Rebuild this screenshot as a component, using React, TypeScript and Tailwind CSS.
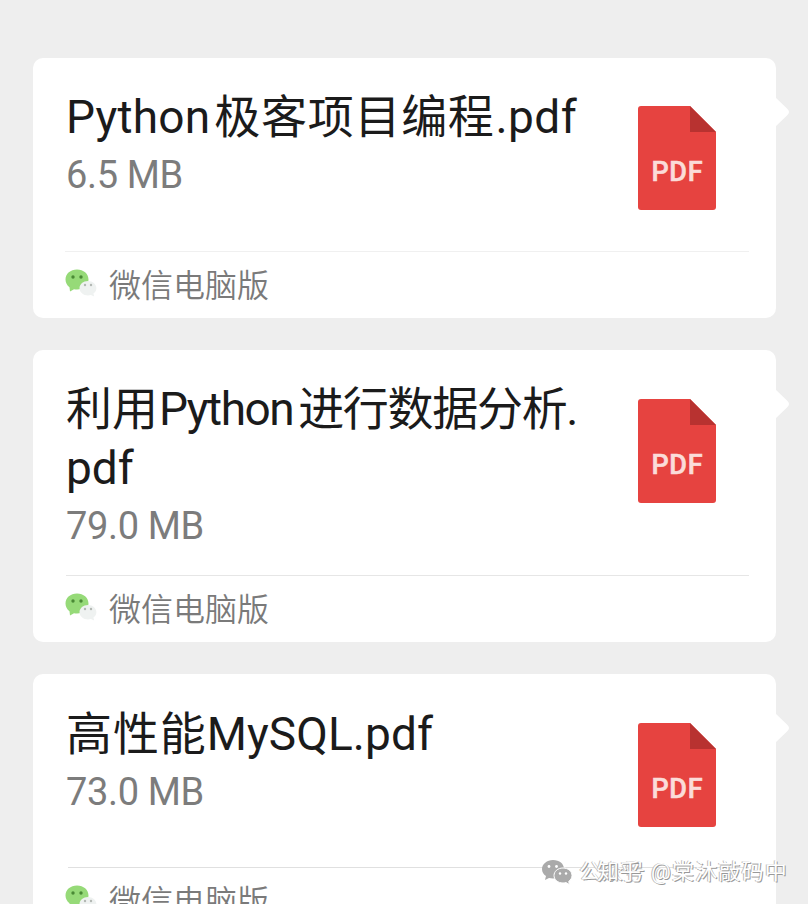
type TextRun = {
    text: string;
    className: string;
};

type FileMessage = {
    // every title line is split into latin and chinese runs
    title: TextRun[][];
    size: string;
    bodyClass: string;
    cardClass: string;
    iconClass: string;
    lineClass: string;
};

const files: FileMessage[] = [
    {
        title: [
            [
                {text: "Python", className: "mr-[4px] tracking-[0.2px]"},
                {text: "极客项目编程", className: "mr-[1px] tracking-[0.7px]"},
                {text: ".pdf", className: "tracking-[0.4px]"},
            ],
        ],
        size: "6.5 MB",
        bodyClass: "h-[193px] pt-[30px]",
        cardClass: "h-[260px]",
        iconClass: "mt-[17px]",
        lineClass: "ml-8 bg-[#f0f0f0]",
    },
    {
        title: [
            [
                {text: "利用", className: "mr-px"},
                {text: "Python", className: "mr-[5px] tracking-[-1.5px]"},
                {text: "进行数据分析", className: "tracking-[-1.3px]"},
                {text: ".", className: ""},
            ],
            [{text: "pdf", className: ""}],
        ],
        size: "79.0 MB",
        bodyClass: "h-[225px] pt-[30px]",
        cardClass: "h-[292px]",
        iconClass: "mt-[18px]",
        lineClass: "ml-[33px] bg-[#e6e6e6]",
    },
    {
        title: [
            [
                {text: "高性能", className: "tracking-[0.9px]"},
                {text: "MySQL.pdf", className: "tracking-[0.1px]"},
            ],
        ],
        size: "73.0 MB",
        bodyClass: "h-[193px] pt-[31px]",
        cardClass: "h-[260px]",
        iconClass: "mt-[17px]",
        lineClass: "ml-[35px] bg-[#e0e0e0]",
    },
];

const PdfIcon = () => (
    <svg width="80" height="106" viewBox="0 0 80 106" className="block shrink-0">
        <path d="M4 1H53L79 27V102Q79 105 76 105H4Q1 105 1 102V4Q1 1 4 1Z" fill="#e64340" />
        <path d="M53 1L79 27H53Z" fill="#b83230" />
        <text x="14.5" y="75.500" fontSize="27" fontWeight="500" textLength="51" fill="#fbdcd9" stroke="#fbdcd9" strokeWidth="0.6" fontFamily="Roboto, sans-serif">
            PDF
        </text>
    </svg>
);

const WechatIcon = () => (
    <svg width="32" height="30" viewBox="0 0 32 30" className="block shrink-0">
        <path d="M12 .5C5.500 .5 .5 4.800 .5 10.500c0 3.200 1.500 5.900 4 7.700L5 22.500l4-2.300c1 .2 2 .3 3 .3 6.500 0 11.500-4.300 11.500-10S18.500 .5 12 .5Z" fill="#96da78" />
        <circle cx="8" cy="8" r="1.700" fill="#4a8a35" />
        <circle cx="16" cy="8" r="1.700" fill="#4a8a35" />
        <path d="M23 12c-4.700 0-8.500 3.200-8.500 7.200s3.800 7.200 8.500 7.200c1 0 2-.1 2.900-.4l3.300 1.600-.8-3c1.800-1.300 3-3.200 3-5.400 0-4-3.700-7.200-8.400-7.200Z" fill="#eff2f1" />
        <circle cx="20" cy="16" r="1.200" fill="#b3b8b4" />
        <circle cx="26" cy="16" r="1.200" fill="#b3b8b4" />
    </svg>
);

const FileCard = ({file}: {file: FileMessage}) => (
    <div className={`relative w-[743px] shrink-0 rounded-[10px] bg-white ${file.cardClass}`}>
        {/* bubble tail */}
        <svg width="15" height="32" viewBox="0 0 15 32" className="absolute top-[38px] left-[742px]">
            <path d="M0 1L12 12.500Q16 16 12 19.500L0 31Z" fill="#fff" />
        </svg>
        <div className={`flex pl-[33px] ${file.bodyClass}`}>
            <div className="w-[571px] shrink-0">
                <h2 className="text-[46px] leading-[59px] whitespace-nowrap text-[#1b1b1b]">
                    {file.title.map((line, i) => (
                        <span key={i} className="block">
                            {line.map(run => (
                                <span key={run.text} className={run.className}>{run.text}</span>
                            ))}
                        </span>
                    ))}
                </h2>
                <p className="text-[38px] leading-[57px] tracking-[-0.35px] text-[#7c7c7c]">{file.size}</p>
            </div>
            <div className={file.iconClass}>
                <PdfIcon />
            </div>
        </div>
        <div className={`mr-[27px] h-px ${file.lineClass}`} />
        <div className="flex pt-[17px] pl-8">
            <WechatIcon />
            <span className="-mt-[5px] ml-3 text-[32px] leading-[44px] font-[350] text-[#7a7a7a]">微信电脑版</span>
        </div>
    </div>
);

const Watermark = () => (
    <div className="absolute top-[856px] left-[541px] flex items-center text-[22px] leading-8 whitespace-nowrap text-white [text-shadow:1px_1px_0_#999,-1px_0_0_#bbb]">
        <svg width="32" height="28" viewBox="0 0 32 28" className="block shrink-0">
            <path d="M12 2C6 2 1 6 1 11c0 3 1.500 5.500 4 7l-1 4 4-2c1.200.3 2.600.5 4 .5 6.500 0 11-4.300 11-9.500S18.500 2 12 2Z" fill="#aaa" />
            <circle cx="8" cy="8.500" r="1.400" fill="#fff" />
            <circle cx="15.500" cy="8.500" r="1.400" fill="#fff" />
            <path d="M22 10c-5.200 0-9 3.400-9 7.500s3.800 7.500 9 7.500c1 0 2-.1 3-.4l3.500 2-.8-3.200c2-1.400 3.300-3.500 3.300-5.900 0-4.100-3.800-7.500-9-7.500Z" fill="#aaa" stroke="#fff" />
            <circle cx="19" cy="15.500" r="1.200" fill="#fff" />
            <circle cx="25" cy="15.500" r="1.200" fill="#fff" />
        </svg>
        <span className="ml-1.5">公众号</span>
        <span className="absolute left-[56px]">知乎</span>
        <span className="ml-1.5 tracking-[1.2px]">@棠沐敲码中</span>
    </div>
);

export default function App() {
    return (
        <main className="relative flex h-[904px] w-[808px] flex-col gap-8 overflow-hidden bg-[#eee] pt-[58px] pl-[33px] font-[Roboto,'Noto_Sans_CJK_SC',sans-serif]">
            {files.map(file => (
                <FileCard key={file.size} file={file} />
            ))}
            <Watermark />
        </main>
    );
}
